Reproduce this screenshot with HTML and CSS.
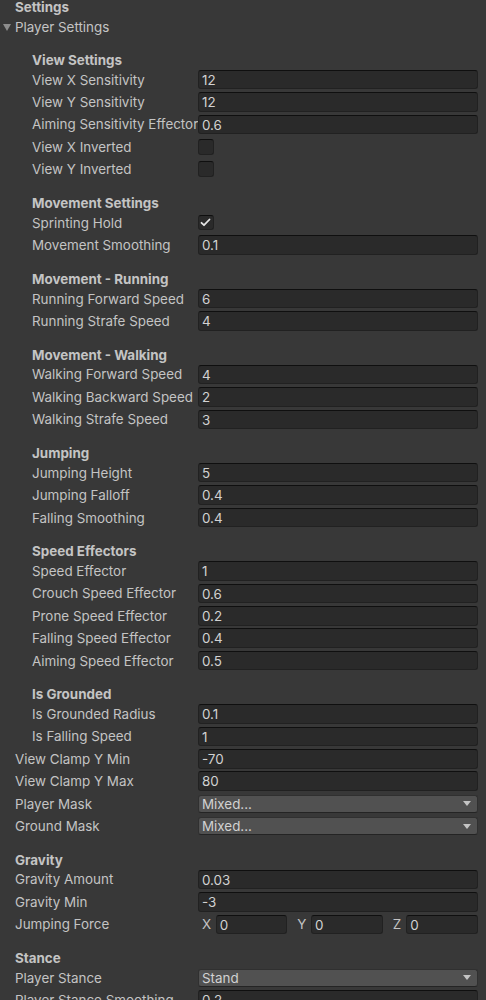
FILE: index.html
```html
<!DOCTYPE html>
<html lang="en">
<head>
    <meta charset="UTF-8">
    <meta name="viewport" content="width=device-width, initial-scale=1.0">
    <title>Inspector - Settings</title>
    <link rel="stylesheet" href="styles.css">
</head>
<body>
    <div class="inspector">
        <div class="title">Settings</div>
        <div class="row foldout">
            <div class="label">
                <svg class="arrow" width="8" height="7" viewBox="0 0 8 7"><polygon points="0,0 8,0 4,7" fill="#8d8d8d"/></svg>
                Player Settings
            </div>
        </div>

        <div class="row header sub"><div class="label">View Settings</div></div>
        <div class="row sub"><div class="label">View X Sensitivity</div><div class="value"><div class="field">12</div></div></div>
        <div class="row sub"><div class="label">View Y Sensitivity</div><div class="value"><div class="field">12</div></div></div>
        <div class="row sub"><div class="label">Aiming Sensitivity Effector</div><div class="value"><div class="field">0.6</div></div></div>
        <div class="row sub"><div class="label">View X Inverted</div><div class="value"><div class="checkbox"></div></div></div>
        <div class="row sub"><div class="label">View Y Inverted</div><div class="value"><div class="checkbox"></div></div></div>

        <div class="row header sub"><div class="label">Movement Settings</div></div>
        <div class="row sub"><div class="label">Sprinting Hold</div><div class="value"><div class="checkbox">
            <svg width="11" height="9" viewBox="0 0 11 9"><polyline points="1.5,4.8 4,7.2 9.5,1.5" fill="none" stroke="#e4e4e4" stroke-width="1.8" stroke-linecap="round" stroke-linejoin="round"/></svg>
        </div></div></div>
        <div class="row sub"><div class="label">Movement Smoothing</div><div class="value"><div class="field">0.1</div></div></div>

        <div class="row header sub"><div class="label">Movement - Running</div></div>
        <div class="row sub"><div class="label">Running Forward Speed</div><div class="value"><div class="field">6</div></div></div>
        <div class="row sub"><div class="label">Running Strafe Speed</div><div class="value"><div class="field">4</div></div></div>

        <div class="row header sub"><div class="label">Movement - Walking</div></div>
        <div class="row sub"><div class="label">Walking Forward Speed</div><div class="value"><div class="field">4</div></div></div>
        <div class="row sub"><div class="label">Walking Backward Speed</div><div class="value"><div class="field">2</div></div></div>
        <div class="row sub"><div class="label">Walking Strafe Speed</div><div class="value"><div class="field">3</div></div></div>

        <div class="row header sub"><div class="label">Jumping</div></div>
        <div class="row sub"><div class="label">Jumping Height</div><div class="value"><div class="field">5</div></div></div>
        <div class="row sub"><div class="label">Jumping Falloff</div><div class="value"><div class="field">0.4</div></div></div>
        <div class="row sub"><div class="label">Falling Smoothing</div><div class="value"><div class="field">0.4</div></div></div>

        <div class="row header sub"><div class="label">Speed Effectors</div></div>
        <div class="row sub"><div class="label">Speed Effector</div><div class="value"><div class="field">1</div></div></div>
        <div class="row sub"><div class="label">Crouch Speed Effector</div><div class="value"><div class="field">0.6</div></div></div>
        <div class="row sub"><div class="label">Prone Speed Effector</div><div class="value"><div class="field">0.2</div></div></div>
        <div class="row sub"><div class="label">Falling Speed Effector</div><div class="value"><div class="field">0.4</div></div></div>
        <div class="row sub"><div class="label">Aiming Speed Effector</div><div class="value"><div class="field">0.5</div></div></div>

        <div class="row header sub"><div class="label">Is Grounded</div></div>
        <div class="row sub"><div class="label">Is Grounded Radius</div><div class="value"><div class="field">0.1</div></div></div>
        <div class="row sub"><div class="label">Is Falling Speed</div><div class="value"><div class="field">1</div></div></div>

        <div class="row"><div class="label">View Clamp Y Min</div><div class="value"><div class="field">-70</div></div></div>
        <div class="row"><div class="label">View Clamp Y Max</div><div class="value"><div class="field">80</div></div></div>
        <div class="row"><div class="label">Player Mask</div><div class="value"><div class="dropdown">Mixed...<span class="caret"></span></div></div></div>
        <div class="row"><div class="label">Ground Mask</div><div class="value"><div class="dropdown">Mixed...<span class="caret"></span></div></div></div>

        <div class="row header"><div class="label">Gravity</div></div>
        <div class="row"><div class="label">Gravity Amount</div><div class="value"><div class="field">0.03</div></div></div>
        <div class="row"><div class="label">Gravity Min</div><div class="value"><div class="field">-3</div></div></div>
        <div class="row"><div class="label">Jumping Force</div>
            <div class="value vector">
                <div class="axis"><span>X</span><div class="field">0</div></div>
                <div class="axis"><span>Y</span><div class="field">0</div></div>
                <div class="axis"><span>Z</span><div class="field">0</div></div>
            </div>
        </div>

        <div class="row header"><div class="label">Stance</div></div>
        <div class="row"><div class="label">Player Stance</div><div class="value"><div class="dropdown">Stand<span class="caret"></span></div></div></div>
        <div class="row"><div class="label">Player Stance Smoothing</div><div class="value"><div class="field">0.2</div></div></div>
    </div>
</body>
</html>
```

FILE: styles.css
```css
body {
    margin: 0;
    background-color: #383838;
    font-family: Inter, "Noto Sans", sans-serif;
    font-size: 13.4px;
    color: #c4c4c4;
    overflow: hidden;
}
.inspector {
    width: 486px;
}
.title {
    height: 17px;
    line-height: 14px;
    padding-left: 15px;
    font-weight: 700;
}
.row {
    display: grid;
    grid-template-columns: 198px 1fr;
    height: 22.4px;
    padding-right: 8px;
    align-items: center;
}
.row.foldout {
    height: 20.4px;
}
.row .label {
    padding-left: 15px;
    white-space: nowrap;
    overflow: hidden;
    position: relative;
}
.row.sub .label {
    padding-left: 32px;
}
.row.header {
    margin-top: 11px;
    height: 20.1px;
}
.row.header .label {
    font-weight: 700;
    overflow: visible;
    top: 1.5px;
}
.foldout .arrow {
    position: absolute;
    left: 3px;
    top: 5px;
}
.value {
    display: flex;
    align-items: center;
}
.field {
    flex: 1;
    box-sizing: border-box;
    height: 19.5px;
    line-height: 18px;
    padding-left: 3px;
    background-color: #2a2a2a;
    border: 1px solid #212121;
    border-top-color: #0f0f0f;
    border-radius: 3px;
    color: #d2d2d2;
    white-space: nowrap;
    overflow: hidden;
}
.checkbox {
    box-sizing: border-box;
    width: 15.5px;
    height: 15.5px;
    background-color: #2a2a2a;
    border: 1px solid #212121;
    border-top-color: #0f0f0f;
    border-radius: 3px;
    display: flex;
    align-items: center;
    justify-content: center;
}
.dropdown {
    flex: 1;
    box-sizing: border-box;
    height: 18px;
    line-height: 16px;
    padding-left: 3px;
    background-color: #515151;
    border: 1px solid #303030;
    border-bottom-color: #242424;
    border-radius: 3px;
    color: #d2d2d2;
    display: flex;
    align-items: center;
    justify-content: space-between;
}
.dropdown .caret {
    width: 0;
    height: 0;
    margin-right: 6px;
    border-left: 4.5px solid transparent;
    border-right: 4.5px solid transparent;
    border-top: 5px solid #c4c4c4;
}
.vector {
    display: grid;
    grid-template-columns: repeat(3, 1fr);
    gap: 6px;
}
.vector .axis {
    display: flex;
    align-items: center;
}
.vector .axis span {
    width: 17.7px;
    padding-left: 4px;
    box-sizing: border-box;
    flex-shrink: 0;
}
```
